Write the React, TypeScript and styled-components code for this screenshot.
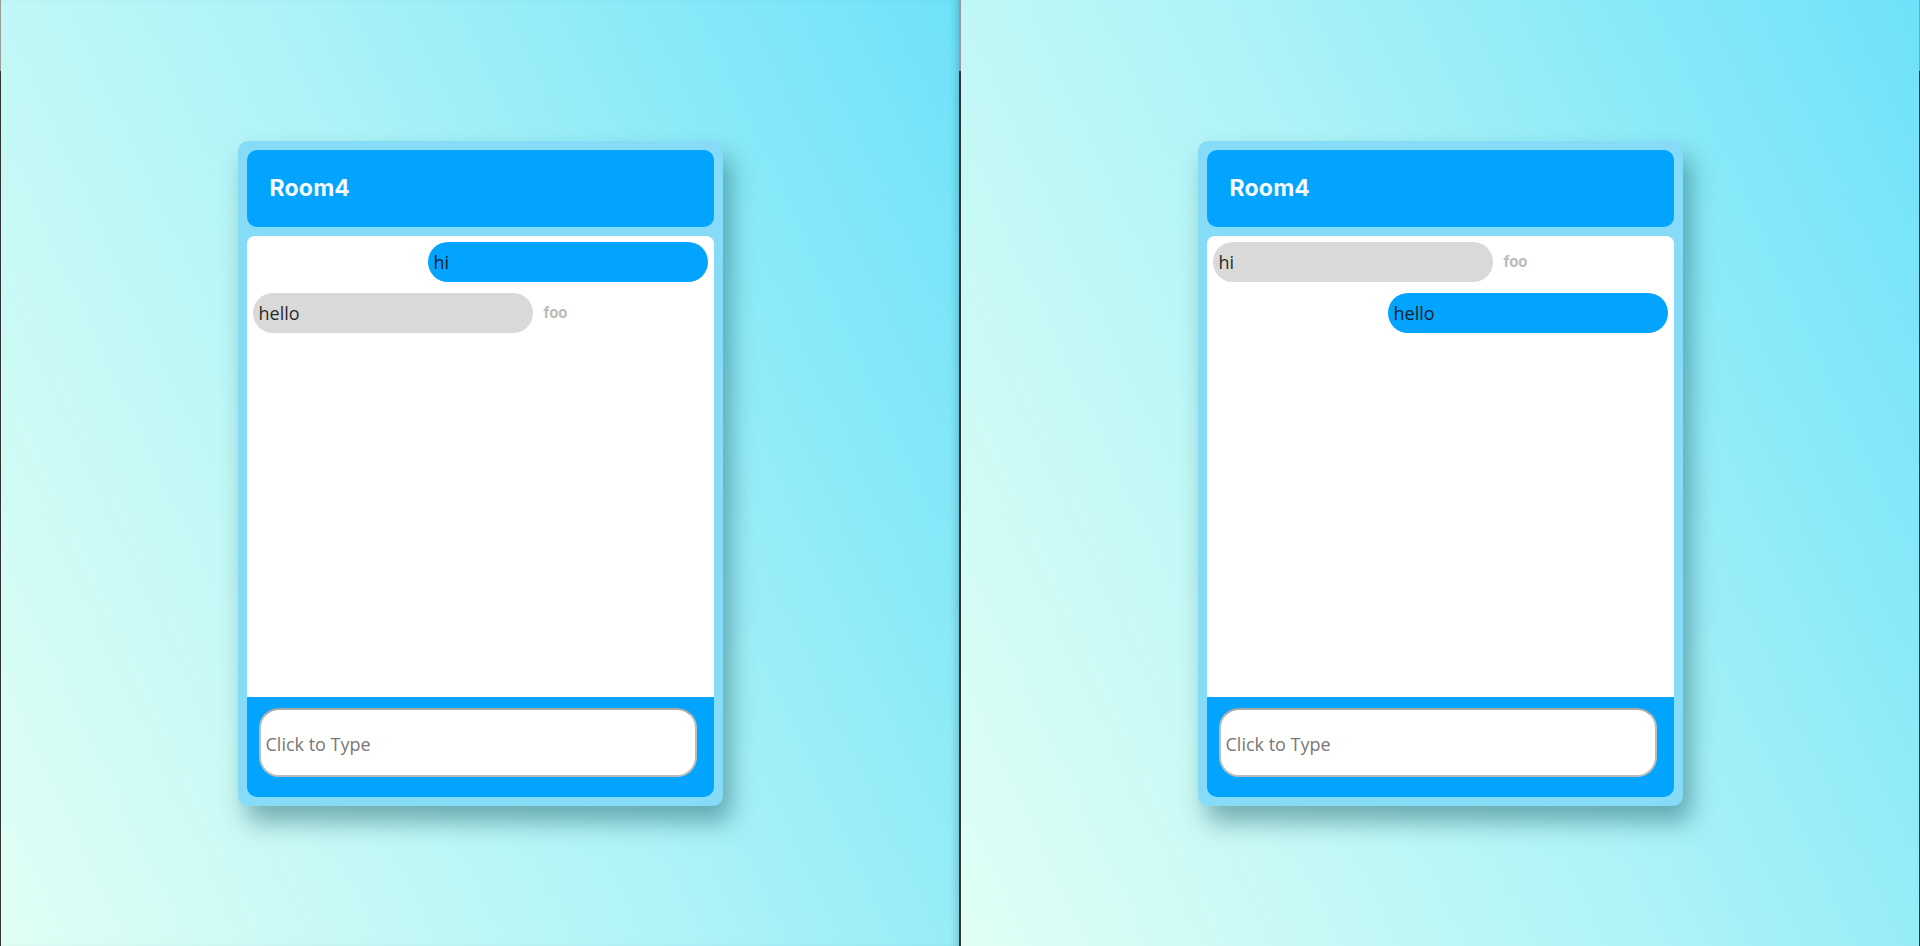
import React from 'react'
import styled, { createGlobalStyle } from 'styled-components'

const GlobalStyle = createGlobalStyle`
    html, body {
        margin: 0;
        padding: 0;
        height: 100%;
        overflow: hidden;
    }
    body {
        font-family: 'Open Sans', 'Liberation Sans', sans-serif;
    }
    #root {
        height: 100%;
    }
`

interface Message {
    id: number
    text: string
    sender?: string
    mine: boolean
}

const Page = styled.div`
    display: flex;
    width: 100vw;
    height: 100vh;
`

const Pane = styled.div<{ $last?: boolean }>`
    flex: 1;
    display: flex;
    align-items: center;
    justify-content: center;
    background: linear-gradient(65deg, #e0fff5 0%, #aef3f7 50%, #6ee2f9 100%);
    border-left: ${({ $last }) => ($last ? '2px' : '1px')} solid #333;
    border-right: ${({ $last }) => ($last ? '1px solid #555' : 'none')};
    border-image: linear-gradient(to bottom, #9a9a9a 0 72px, #333 72px 100%) 1;
    box-shadow: ${({ $last }) => ($last ? 'none' : 'inset -8px 0 8px -6px rgba(0, 60, 80, 0.25)')};
`

const Card = styled.div`
    width: 485px;
    height: 665px;
    box-sizing: border-box;
    padding: 9px;
    border-radius: 10px;
    background: #86dcf6;
    box-shadow: 8px 16px 24px rgba(0, 70, 80, 0.42);
    display: flex;
    flex-direction: column;
`

const Header = styled.div`
    height: 77px;
    flex-shrink: 0;
    margin-bottom: 9px;
    padding: 0 23px;
    border-radius: 10px;
    background: #02a4ff;
    display: flex;
    align-items: center;
    color: #f5fbff;
    font-family: Inter, 'Open Sans', sans-serif;
    font-size: 23px;
    font-weight: 700;
    letter-spacing: 0.2px;
`

const Messages = styled.div`
    flex: 1;
    background: #fff;
    border-radius: 8px 8px 0 0;
    padding: 6px;
    display: flex;
    flex-direction: column;
    gap: 11px;
`

const Row = styled.div<{ $mine: boolean }>`
    display: flex;
    align-items: center;
    justify-content: ${({ $mine }) => ($mine ? 'flex-end' : 'flex-start')};
    gap: 11px;
`

const Bubble = styled.div<{ $mine: boolean }>`
    width: 280px;
    height: 40px;
    box-sizing: border-box;
    padding: 0 6px;
    border-radius: 20px;
    background: ${({ $mine }) => ($mine ? '#02a4ff' : '#d9d9d9')};
    color: ${({ $mine }) => ($mine ? '#10202a' : '#2a2a2a')};
    display: flex;
    align-items: center;
    font-size: 18px;
`

const Sender = styled.span`
    color: #bbb;
    font-family: Inter, 'Open Sans', sans-serif;
    font-size: 15px;
    font-weight: 700;
`

const Footer = styled.div`
    height: 100px;
    flex-shrink: 0;
    box-sizing: border-box;
    padding: 11px 17px 20px 12px;
    background: #02a4ff;
    border-radius: 0 0 10px 10px;
`

const Input = styled.input`
    width: 100%;
    height: 69px;
    box-sizing: border-box;
    padding: 3px 5px 0;
    border: 2px solid #bcbcbc;
    border-top-color: #a9a9a9;
    border-radius: 20px;
    background: #fff;
    font-family: 'Open Sans', 'Liberation Sans', sans-serif;
    font-size: 18px;
    color: #222;
    outline: none;
    &::placeholder {
        color: #777;
    }
`

const ChatWindow = ({ messages, last }: { messages: Message[]; last?: boolean }) => (
    <Pane $last={last}>
        <Card>
            <Header>Room4</Header>
            <Messages>
                {messages.map(m => (
                    <Row key={m.id} $mine={m.mine}>
                        <Bubble $mine={m.mine}>{m.text}</Bubble>
                        {!m.mine && m.sender && <Sender>{m.sender}</Sender>}
                    </Row>
                ))}
            </Messages>
            <Footer>
                <Input placeholder="Click to Type" />
            </Footer>
        </Card>
    </Pane>
)

const App = () => (
    <>
        <GlobalStyle />
        <Page>
            <ChatWindow
                messages={[
                    { id: 1, text: 'hi', mine: true },
                    { id: 2, text: 'hello', sender: 'foo', mine: false }
                ]}
            />
            <ChatWindow
                last
                messages={[
                    { id: 1, text: 'hi', sender: 'foo', mine: false },
                    { id: 2, text: 'hello', mine: true }
                ]}
            />
        </Page>
    </>
)

export default App
